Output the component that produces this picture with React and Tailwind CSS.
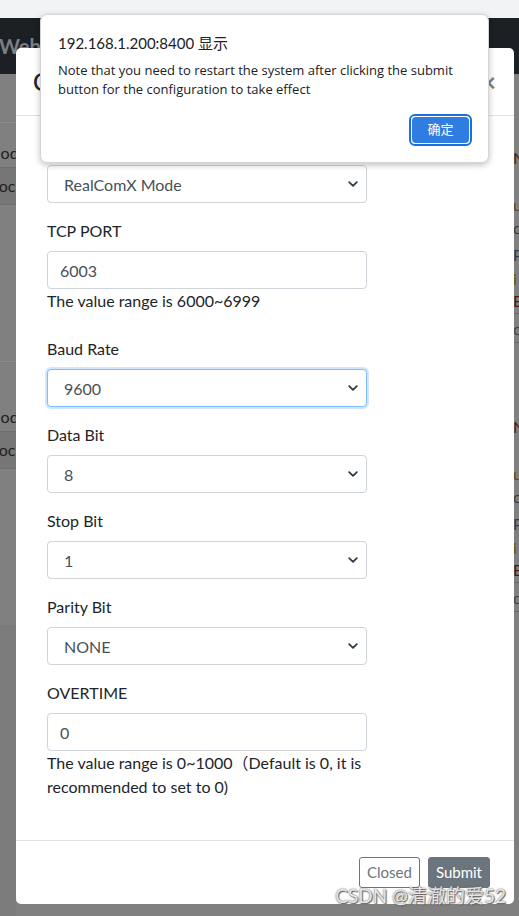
import React from 'react';

const FONT = { fontFamily: '"Lato", "Noto Sans CJK SC", sans-serif' };

const Chevron = () => (
  <svg width="10" height="6" viewBox="0 0 10 6" className="absolute right-[8px] top-1/2 -translate-y-1/2">
    <path d="M1.2 1.2 L5 4.8 L8.8 1.2" fill="none" stroke="#343a40" strokeWidth="1.8" strokeLinecap="round" strokeLinejoin="round" />
  </svg>
);

const SelectBox = ({ value, focused }) => (
  <div
    className={`relative w-[320px] h-[38px] rounded-[4px] border bg-white flex items-center pl-[16px] pt-[1px] text-[16px] text-[#495057] ${
      focused ? 'border-[#80bdff] shadow-[0_0_0_2px_rgba(0,123,255,0.18)]' : 'border-[#ced4da]'
    }`}
  >
    {value}
    <Chevron />
  </div>
);

const TextBox = ({ value }) => (
  <div className="w-[320px] h-[38px] rounded-[4px] border border-[#ced4da] bg-white flex items-center pl-[12px] pt-[1px] text-[16px] text-[#495057]">
    {value}
  </div>
);

// help text keeps its own gap as padding, so it does not collapse into the group's margin
const Field = ({ label, children, help }) => (
  <div className="mb-4">
    <div className="text-[16px] leading-[24px] text-[#212529] mb-2">{label}</div>
    {children}
    {help && <div className="text-[16px] leading-[24px] text-[#212529] pb-2">{help}</div>}
  </div>
);

const RightBits = ({ top }) => (
  <div className="flex flex-col text-[16px] leading-[20px]" style={{ marginTop: top }}>
    <span className="text-[#4d1717]">N</span>
    <span className="text-[#5f4320] mt-[27px]">u</span>
    <span className="text-[#3a3a3a] mt-[3px]">c</span>
    <span className="text-[#2d3c55] mt-[7px]">P</span>
    <span className="text-[#6a4f12] mt-[4px]">i</span>
    <span className="text-[#4d1717] mt-[2px]">E</span>
    <div className="border-t border-[#666] mt-[2px]" />
    <span className="text-[#444] mt-[5px]">o</span>
    <div className="border-t border-[#666] mt-[3px]" />
  </div>
);

export default function App() {
  return (
    <div className="relative w-[519px] h-[916px] overflow-hidden" style={FONT}>
      {/* page under the backdrop */}
      <div className="flex flex-col h-full">
        <div className="h-[18px] bg-[#f1f3f4]" />
        <div className="h-[56px] bg-[#1c1f23] flex items-center">
          <span className="text-[20px] font-bold text-[#7b7f84] -ml-[1px]">Web</span>
        </div>
        <div className="flex-1 bg-[#808080] flex justify-between">
          <div className="w-[16px] overflow-hidden flex flex-col text-[16px] text-[#1e1e1e]">
            <div className="h-[49px] border-b border-[#8a8a8a]" />
            <div className="h-[45px] border-b border-[#6f6f6f] flex items-end pb-[2px] -ml-[14px]">Mode</div>
            <div className="h-[37px] bg-[#767676] border-b border-[#6f6f6f] flex items-center -ml-[9px]">Loc</div>
            <div className="h-[157px] border-b border-[#8a8a8a]" />
            <div className="h-[70px] border-b border-[#6f6f6f] flex items-end pb-[2px] -ml-[14px]">Mode</div>
            <div className="h-[37px] bg-[#767676] border-b border-[#6f6f6f] flex items-center -ml-[9px]">Loc</div>
            <div className="h-[157px] border-b border-[#7a7a7a]" />
            <div className="flex-1 bg-[#7b7b7b]" />
          </div>
          <div className="w-[7px] overflow-hidden pl-[1px]">
            <RightBits top="74px" />
            <RightBits top="74px" />
          </div>
        </div>
      </div>

      {/* modal */}
      <div className="absolute left-[16px] top-[48px] w-[498px] h-[856px] bg-white rounded-[5px] flex flex-col">
        <div className="h-[68px] border-b border-[#dee2e6] flex items-center justify-between pl-[17px] pr-[18px]">
          <span className="text-[24px] leading-[36px] font-medium text-[#212529]">Configuration</span>
          <span className="text-[26px] font-bold text-[#000] opacity-50 leading-none">×</span>
        </div>
        <div className="pt-[17px] pb-[17px] pl-[31px]">
          <Field label="Work Mode">
            <SelectBox value="RealComX Mode" />
          </Field>
          <Field label="TCP PORT" help="The value range is 6000~6999">
            <TextBox value="6003" />
          </Field>
          <Field label="Baud Rate">
            <SelectBox value="9600" focused />
          </Field>
          <Field label="Data Bit">
            <SelectBox value="8" />
          </Field>
          <Field label="Stop Bit">
            <SelectBox value="1" />
          </Field>
          <Field label="Parity Bit">
            <SelectBox value="NONE" />
          </Field>
          <Field
            label="OVERTIME"
            help={
              <>
                The value range is 0~1000（Default is 0, it is
                <br />
                recommended to set to 0)
              </>
            }
          >
            <TextBox value="0" />
          </Field>
        </div>
        <div className="border-t border-[#dee2e6] flex justify-end gap-2 pt-4 pr-[24px]">
          <button className="h-[31px] px-[7px] rounded-[3px] border border-[#6c757d] text-[#6c757d] text-[15px] bg-white">
            Closed
          </button>
          <button className="h-[31px] px-[7px] rounded-[3px] border border-[#6c757d] bg-[#6c757d] text-white text-[15px]">
            Submit
          </button>
        </div>
      </div>

      {/* browser alert */}
      <div className="absolute left-[40px] top-[14px] w-[449px] h-[149px] bg-white rounded-[7px] border border-[#d5d5d5] shadow-[0_2px_6px_rgba(0,0,0,0.25)] flex flex-col pl-[17px] pr-[16px] pt-[18px] pb-[16px]">
        <div className="text-[15px] leading-[20px] text-[#202124]">192.168.1.200:8400 显示</div>
        <div className="mt-[8px] text-[13px] leading-[19px] text-[#202124] font-['Open_Sans','Noto_Sans_CJK_SC',sans-serif]">
          Note that you need to restart the system after clicking the submit
          <br />
          button for the configuration to take effect
        </div>
        <div className="mt-auto flex justify-end">
          <div className="w-[63px] h-[32px] rounded-[6px] border-2 border-[#1a6fe0] bg-white p-[1px]">
            <div className="w-full h-full rounded-[4px] bg-[#2f7de1] flex items-center justify-center text-white text-[13px]">
              确定
            </div>
          </div>
        </div>
      </div>

      {/* watermark */}
      <div className="absolute right-[13px] bottom-[6px] text-[19px] text-[#e6e6e6] [text-shadow:0_0_2px_#555,1px_1px_1px_#666]">
        CSDN @清澈的爱52
      </div>
    </div>
  );
}
